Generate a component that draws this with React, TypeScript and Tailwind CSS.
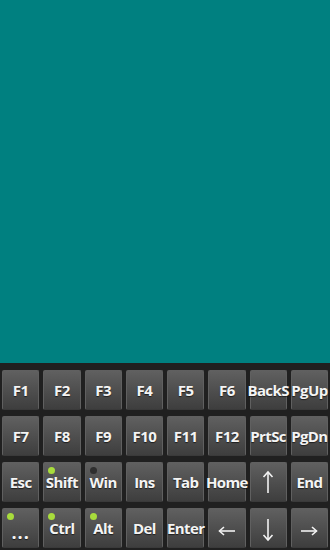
import React from 'react';

type KeyDef = {
  label: string;
  dot?: 'on' | 'off';
  arrow?: 'up' | 'down' | 'left' | 'right';
  low?: boolean;
};

const rows: KeyDef[][] = [
  [{ label: 'F1' }, { label: 'F2' }, { label: 'F3' }, { label: 'F4' }, { label: 'F5' }, { label: 'F6' }, { label: 'BackS' }, { label: 'PgUp' }],
  [{ label: 'F7' }, { label: 'F8' }, { label: 'F9' }, { label: 'F10' }, { label: 'F11' }, { label: 'F12' }, { label: 'PrtSc' }, { label: 'PgDn' }],
  [
    { label: 'Esc' },
    { label: 'Shift', dot: 'on' },
    { label: 'Win', dot: 'off' },
    { label: 'Ins' },
    { label: 'Tab' },
    { label: 'Home' },
    { label: '', arrow: 'up' },
    { label: 'End' },
  ],
  [
    { label: '...', dot: 'on', low: true },
    { label: 'Ctrl', dot: 'on' },
    { label: 'Alt', dot: 'on' },
    { label: 'Del' },
    { label: 'Enter' },
    { label: '', arrow: 'left' },
    { label: '', arrow: 'down' },
    { label: '', arrow: 'right' },
  ],
];

const Arrow = ({ dir }: { dir: 'up' | 'down' | 'left' | 'right' }) => {
  if (dir === 'up' || dir === 'down') {
    return (
      <svg width="12" height="24" viewBox="0 0 12 24" className={dir === 'down' ? 'rotate-180 mt-1' : ''}>
        <path d="M6 2 L6 23" stroke="#f2f2f2" strokeWidth="1.6" fill="none" />
        <path d="M1.5 7 L6 2 L10.5 7" stroke="#f2f2f2" strokeWidth="1.6" fill="none" />
      </svg>
    );
  }
  return (
    <svg width="18" height="10" viewBox="0 0 18 10" className={`mt-[6px] ${dir === 'right' ? 'rotate-180' : ''}`}>
      <path d="M1.5 5 L17 5" stroke="#f2f2f2" strokeWidth="1.6" fill="none" />
      <path d="M6 1 L1.5 5 L6 9" stroke="#f2f2f2" strokeWidth="1.6" fill="none" />
    </svg>
  );
};

const Key = ({ k }: { k: KeyDef }) => (
  <div className="relative h-[40px] rounded-[2px] border border-[#606060] border-b-[#3a3a3a] bg-gradient-to-b from-[#606060] to-[#3e3e3e] flex items-center justify-center">
    {k.dot && (
      <span
        className={`absolute left-[4px] top-[4px] w-[7px] h-[7px] rounded-full ${
          k.dot === 'on' ? 'bg-[#a8dc3c]' : 'bg-[#2e2e2e]'
        }`}
      />
    )}
    {k.arrow ? (
      <Arrow dir={k.arrow} />
    ) : (
      <span
        className={`font-bold text-[#f4f4f4] whitespace-nowrap [text-shadow:0_1px_1px_rgba(0,0,0,0.6)] ${
          k.low ? 'mt-[8px] text-[18px] tracking-[1px]' : 'mt-[1px] text-[15px] tracking-[-0.6px]'
        }`}
        style={{ fontFamily: '"Open Sans", "DejaVu Sans", sans-serif' }}
      >
        {k.label}
      </span>
    )}
  </div>
);

export default function App() {
  return (
    <div className="w-[330px] h-[550px] flex flex-col bg-[#008080]">
      <div className="flex-1" />
      <div className="h-[187px] bg-[#202020] px-[2px] pt-[7px] grid grid-cols-8 gap-x-[4px] gap-y-[6px] content-start">
        {rows.flat().map((k, i) => (
          <Key key={i} k={k} />
        ))}
      </div>
    </div>
  );
}
